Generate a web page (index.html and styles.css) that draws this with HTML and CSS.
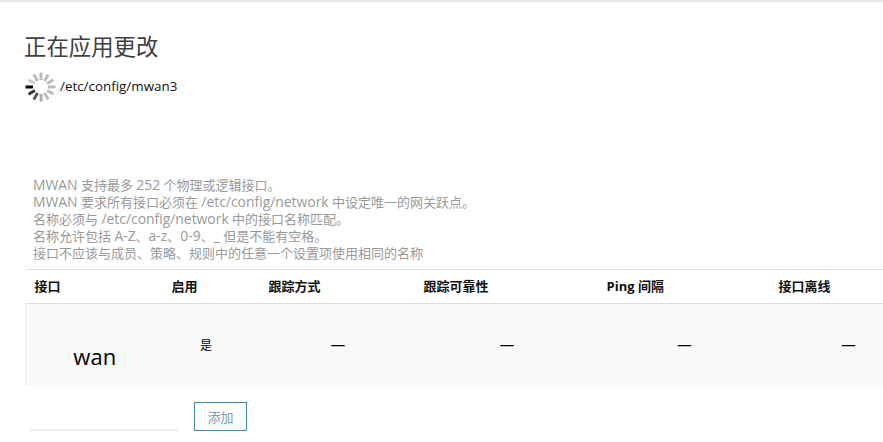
FILE: index.html
```html
<!DOCTYPE html>
<html lang="zh-CN">
<head>
<meta charset="utf-8">
<title>MWAN</title>
<link rel="stylesheet" href="styles.css">
</head>
<body>
<main class="page">
  <h2 class="title">正在应用更改</h2>
  <div class="status">
    <svg class="spinner" viewBox="0 0 32 32" aria-hidden="true">
      <g stroke-width="3">
        <line x1="16" y1="1.5" x2="16" y2="9" stroke="#bbb"/>
        <line x1="23.2" y1="3.5" x2="19.5" y2="9.9" stroke="#bbb"/>
        <line x1="28.5" y1="8.8" x2="22.1" y2="12.5" stroke="#bbb"/>
        <line x1="30.5" y1="16" x2="23" y2="16" stroke="#bbb"/>
        <line x1="28.5" y1="23.2" x2="22.1" y2="19.5" stroke="#bbb"/>
        <line x1="23.2" y1="28.5" x2="19.5" y2="22.1" stroke="#bbb"/>
        <line x1="16" y1="30.5" x2="16" y2="23" stroke="#aaa"/>
        <line x1="8.8" y1="28.5" x2="12.5" y2="22.1" stroke="#555"/>
        <line x1="3.5" y1="23.2" x2="9.9" y2="19.5" stroke="#333"/>
        <line x1="0.5" y1="16" x2="8" y2="16" stroke="#000"/>
        <line x1="3.5" y1="8.8" x2="9.9" y2="12.5" stroke="#ccc"/>
        <line x1="8.8" y1="3.5" x2="12.5" y2="9.9" stroke="#bbb"/>
      </g>
    </svg>
    <span>/etc/config/mwan3</span>
  </div>
  <div class="desc">
    <div class="line"><span class="lat">MWAN</span> 支持最多 <span class="lat">252</span> 个物理或逻辑接口。</div>
    <div class="line"><span class="lat">MWAN</span> 要求所有接口必须在 <span class="lat">/etc/config/network</span> 中设定唯一的网关跃点。</div>
    <div class="line">名称必须与 <span class="lat">/etc/config/network</span> 中的接口名称匹配。</div>
    <div class="line">名称允许包括 <span class="lat">A-Z</span>、<span class="lat">a-z</span>、<span class="lat">0-9</span>、<span class="lat">_</span> 但是不能有空格。</div>
    <div class="line">接口不应该与成员、策略、规则中的任意一个设置项使用相同的名称</div>
  </div>
  <table class="grid">
    <colgroup>
      <col class="c1"><col class="c2"><col class="c3"><col class="c4"><col class="c5"><col class="c6">
    </colgroup>
    <thead>
      <tr><th>接口</th><th>启用</th><th>跟踪方式</th><th>跟踪可靠性</th><th>Ping 间隔</th><th>接口离线</th></tr>
    </thead>
    <tbody>
      <tr>
        <td class="name"><span>wan</span></td>
        <td class="enabled">是</td>
        <td>—</td><td>—</td><td>—</td><td>—</td>
      </tr>
    </tbody>
  </table>
  <div class="actions">
    <div class="field"></div>
    <button class="add" type="button">添加</button>
  </div>
</main>
</body>
</html>
```

FILE: styles.css
```css
html, body {
  margin: 0;
  padding: 0;
  overflow: hidden;
  background: #fff;
}
body {
  height: 442px;
  font-family: "Open Sans", "Noto Sans CJK SC", sans-serif;
  color: #000;
}
.page {
  border-top: 2px solid #e5e5e5;
  padding: 31px 0 0 25px;
}
.title {
  margin: 0 0 0 -1px;
  font-size: 22.4px;
  font-weight: 400;
  line-height: 28px;
  color: #404040;
}
.status {
  display: flex;
  align-items: center;
  gap: 3px;
  height: 32px;
  margin-top: 10px;
  font-size: 13.4px;
  color: #111;
}
.status span {
  position: relative;
  top: -1px;
}
.spinner {
  width: 32px;
  height: 32px;
  flex: none;
}
.desc {
  margin: 74px 0 0 8px;
  font-size: 13px;
  color: #999;
}
.line {
  height: 17px;
  line-height: 17px;
  white-space: nowrap;
}
.lat {
  font-size: 13.9px;
  line-height: 0;
}
.grid {
  border-collapse: collapse;
  table-layout: fixed;
  width: 901px;
  margin-top: 7px;
}
.c1 { width: 138px; }
.c2 { width: 97px; }
.c3 { width: 155px; }
.c4 { width: 183px; }
.c5 { width: 172px; }
.c6 { width: 156px; }
.grid th {
  height: 31px;
  padding: 0 0 2px 8px;
  border-top: 1px solid #ddd;
  border-bottom: 1px solid #ddd;
  text-align: left;
  font-size: 13px;
  font-weight: 700;
  color: #111;
}
.grid th:first-child {
  padding-left: 9px;
}
.grid td {
  height: 81px;
  padding: 0;
  background: #f9f9f9;
  text-align: center;
  font-size: 14.5px;
}
.grid td.name {
  border-left: 1px solid #eee;
  font-size: 22px;
}
.grid td.name span {
  position: relative;
  top: 11px;
}
.grid td.enabled {
  padding-right: 12px;
  font-size: 12px;
}
.actions {
  display: flex;
  align-items: flex-end;
  margin-top: 17px;
  padding-left: 5px;
}
.field {
  width: 148px;
  height: 2px;
  background: #eee;
}
.add {
  margin-left: 16px;
  width: 53px;
  height: 29px;
  padding: 0;
  border: 1px solid #3c8ea8;
  background: #fff;
  color: #7a9dab;
  font-family: inherit;
  font-size: 13px;
}
```
